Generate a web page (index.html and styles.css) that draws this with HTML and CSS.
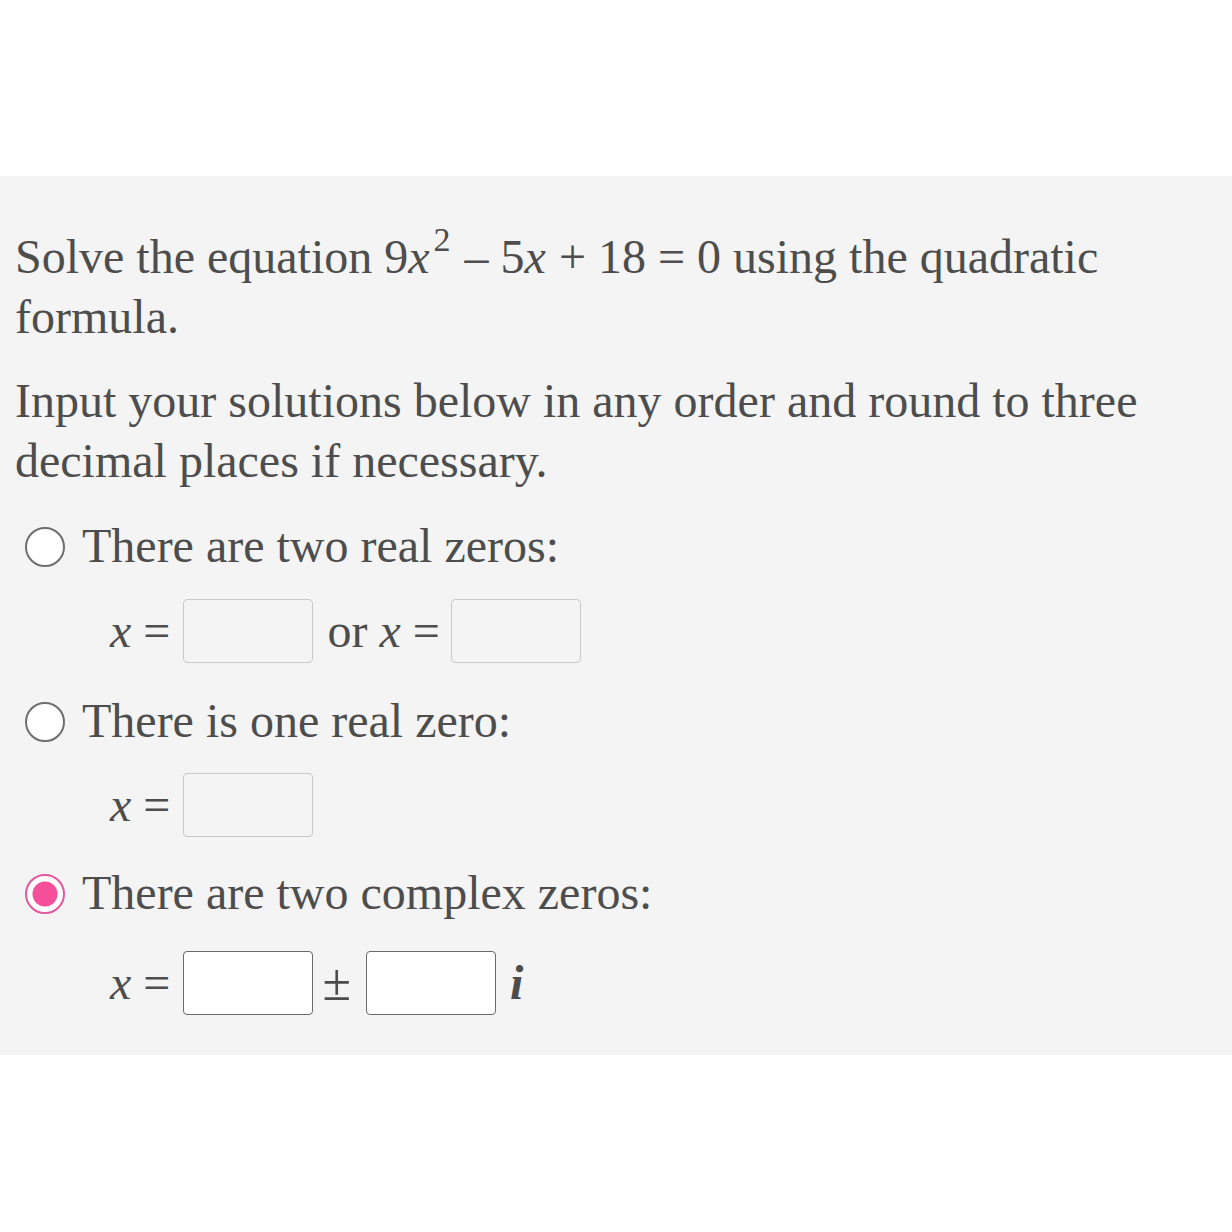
FILE: index.html
```html
<!DOCTYPE html>
<html>
<head>
<meta charset="utf-8">
<link rel="stylesheet" href="styles.css">
</head>
<body>
<div class="top"></div>
<div class="panel">
  <p class="para">Solve the equation 9<i>x</i><sup>2</sup> – 5<i>x</i> + 18 = 0 using the quadratic formula.</p>
  <p class="para p2">Input your solutions below in any order and round to three decimal places if necessary.</p>

  <div class="option o1">
    <span class="radio"></span><span class="label">There are two real zeros:</span>
  </div>
  <div class="answer a1">
    <span class="eq"><i>x</i> =</span><span class="box"></span><span class="eq or">or <i>x</i> =</span><span class="box b2"></span>
  </div>

  <div class="option o2">
    <span class="radio"></span><span class="label">There is one real zero:</span>
  </div>
  <div class="answer a2">
    <span class="eq"><i>x</i> =</span><span class="box"></span>
  </div>

  <div class="option o3">
    <span class="radio on"></span><span class="label">There are two complex zeros:</span>
  </div>
  <div class="answer a3 active">
    <span class="eq"><i>x</i> =</span><span class="box"></span><span class="pm">±</span><span class="box b3"></span><span class="imag">i</span>
  </div>
</div>
</body>
</html>
```

FILE: styles.css
```css
html, body {
  margin: 0;
  padding: 0;
  background: #ffffff;
}
body {
  font-family: "Liberation Serif", "Times New Roman", serif;
  color: #4d4d4d;
  font-size: 48px;
}
.top {
  height: 176px;
}
.panel {
  background: #f4f4f4;
  height: 879px;
  box-sizing: border-box;
  padding: 51px 15px 0 15px;
}
.para {
  margin: 0;
  line-height: 60px;
  width: 1180px;
}
.para i {
  margin-right: 1px;
}
.para sup {
  font-size: 34px;
  line-height: 0;
  vertical-align: 22px;
  margin-left: 3px;
  margin-right: 2px;
}
.p2 {
  margin-top: 24px;
}
.option {
  display: flex;
  align-items: center;
  height: 60px;
  margin-left: 10px;
}
.o1 { margin-top: 25px; }
.o2 { margin-top: 28px; }
.o3 { margin-top: 26px; }
.radio {
  width: 36px;
  height: 36px;
  border: 2px solid #6e6e6e;
  border-radius: 50%;
  background: #ffffff;
  box-sizing: content-box;
  margin-right: 17px;
  margin-top: 2px;
  flex: none;
}
.radio.on {
  border-color: #e5579c;
  background: radial-gradient(circle, #f44f98 0 12px, #ffffff 13px);
}
.label {
  line-height: 60px;
}
.answer {
  display: flex;
  align-items: center;
  padding-left: 95px;
  margin-top: 22px;
  height: 65px;
}
.a2 { margin-top: 21px; }
.a3 { margin-top: 27px; }
.eq {
  margin-right: 13px;
}
.or {
  margin-left: 14px;
  margin-right: 11px;
}
.box {
  width: 128px;
  height: 62px;
  border: 1.5px solid #c9c9c9;
  border-radius: 4px;
  background: #f4f4f4;
  flex: none;
}
.active .box {
  border-color: #6a6a6a;
  background: #ffffff;
}
.pm {
  margin: 0 15px 0 9px;
  font-size: 52px;
}
.imag {
  font-style: italic;
  font-weight: bold;
  margin-left: 14px;
}
```
